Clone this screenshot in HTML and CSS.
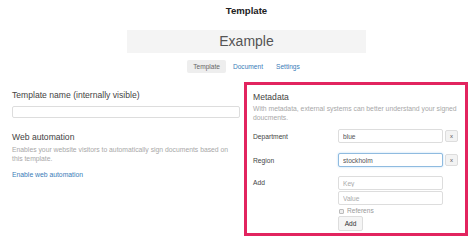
FILE: index.html
```html
<!DOCTYPE html>
<html lang="en">
<head>
    <meta charset="UTF-8">
    <meta name="viewport" content="width=device-width, initial-scale=1.0">
    <title>Template</title>
    <link rel="stylesheet" href="styles.css">
</head>
<body>
    <div class="page-header">
        <div class="title">Template</div>
        <div class="name-box">Example</div>
        <div class="tabs">
            <span class="tab active">Template</span>
            <a class="tab" href="#">Document</a>
            <a class="tab" href="#">Settings</a>
        </div>
    </div>

    <div class="content">
        <div class="left-col">
            <label class="section-label" for="tplName">Template name (internally visible)</label>
            <input type="text" id="tplName" class="wide-input">

            <div class="section-label web-title">Web automation</div>
            <div class="help">Enables your website visitors to automatically sign documents based on this template.</div>
            <a class="link" href="#">Enable web automation</a>
        </div>

        <div class="meta-box">
            <div class="section-label">Metadata</div>
            <div class="help">With metadata, external systems can better understand your signed doucments.</div>

            <div class="meta-row">
                <div class="meta-label">Department</div>
                <input type="text" class="meta-input" value="blue">
                <button class="remove-btn">x</button>
            </div>
            <div class="meta-row region">
                <div class="meta-label">Region</div>
                <input type="text" class="meta-input focused" value="stockholm">
                <button class="remove-btn">x</button>
            </div>
            <div class="meta-row add-row">
                <div class="meta-label">Add</div>
                <div class="add-fields">
                    <input type="text" class="meta-input" placeholder="Key">
                    <input type="text" class="meta-input" placeholder="Value">
                    <label class="check"><input type="checkbox"> Referens</label>
                    <button class="add-btn">Add</button>
                </div>
            </div>
        </div>
    </div>
</body>
</html>
```

FILE: styles.css
```css
* {
    box-sizing: border-box;
    margin: 0;
    padding: 0;
}

body {
    font-family: "Liberation Sans", Arial, sans-serif;
    color: #333;
    background: white;
}

.page-header {
    padding-left: 19px;
    text-align: center;
}

.title {
    font-size: 9.6px;
    font-weight: bold;
    line-height: 12px;
    padding-top: 5px;
    color: #222;
}

.name-box {
    width: 239px;
    height: 23px;
    margin: 13px auto 0;
    background: #f4f4f4;
    font-size: 14px;
    line-height: 23px;
    color: #555;
}

.tabs {
    display: flex;
    justify-content: center;
    gap: 1px;
    margin-top: 7px;
}

.tab {
    font-size: 6.6px;
    line-height: 13px;
    padding: 0 6px;
    color: #3a7db8;
    text-decoration: none;
}

.tab.active {
    background: #eee;
    color: #666;
    border-radius: 2px;
}

.content {
    display: flex;
    gap: 4px;
    padding-left: 12px;
    margin-top: 9px;
}

.left-col {
    width: 228px;
}

.section-label {
    display: block;
    font-size: 8.6px;
    line-height: 10px;
    color: #444;
}

.left-col > .section-label:first-child {
    margin-top: 8px;
}

.wide-input {
    display: block;
    width: 100%;
    height: 12px;
    margin-top: 6px;
    border: 1px solid #ddd;
    border-radius: 2px;
}

.web-title {
    margin-top: 14px;
}

.help {
    font-size: 6.8px;
    line-height: 9px;
    color: #a8a8a8;
    margin-top: 3px;
}

.link {
    display: block;
    font-size: 6.8px;
    line-height: 10px;
    margin-top: 7px;
    color: #3a7db8;
    text-decoration: none;
}

.meta-box {
    width: 224px;
    height: 154px;
    border: 3px solid #e2245f;
    padding: 7px 6px 2px;
}

.meta-box .help {
    margin-top: 2px;
}

.meta-row {
    display: flex;
    align-items: center;
    margin-top: 7px;
}

.meta-row.region {
    margin-top: 10px;
}

.meta-row.add-row {
    align-items: flex-start;
    margin-top: 9px;
}

.meta-label {
    width: 85px;
    font-size: 6.7px;
    color: #444;
}

.add-row .meta-label {
    line-height: 14px;
}

.meta-input {
    display: block;
    width: 105px;
    height: 14px;
    padding: 0 4px;
    border: 1px solid #ddd;
    border-radius: 2px;
    font-family: inherit;
    font-size: 6.6px;
    color: #555;
}

.meta-input::placeholder {
    color: #aaa;
}

.meta-input.focused {
    border-color: #8fbbe0;
    box-shadow: 0 0 2px rgba(102,175,233,0.5);
}

.remove-btn {
    width: 13px;
    height: 12px;
    margin-left: 2px;
    border: 1px solid #ddd;
    border-radius: 2px;
    background: #f3f3f3;
    font-family: inherit;
    font-size: 6px;
    line-height: 10px;
    color: #555;
}

.add-fields .meta-input + .meta-input {
    margin-top: 1px;
}

.check {
    display: flex;
    align-items: center;
    gap: 3px;
    height: 9px;
    margin-top: 1px;
    font-size: 6.6px;
    color: #999;
}

.check input {
    appearance: none;
    -webkit-appearance: none;
    width: 5px;
    height: 5px;
    margin: 2px 0 0 1px;
    border: 1px solid #bbb;
    border-radius: 1px;
    background: #eee;
}

.add-btn {
    display: block;
    width: 25px;
    height: 15px;
    margin-top: 1px;
    border: 1px solid #ddd;
    border-radius: 2px;
    background: #f5f5f5;
    font-family: inherit;
    font-size: 6.6px;
    color: #333;
}
```
